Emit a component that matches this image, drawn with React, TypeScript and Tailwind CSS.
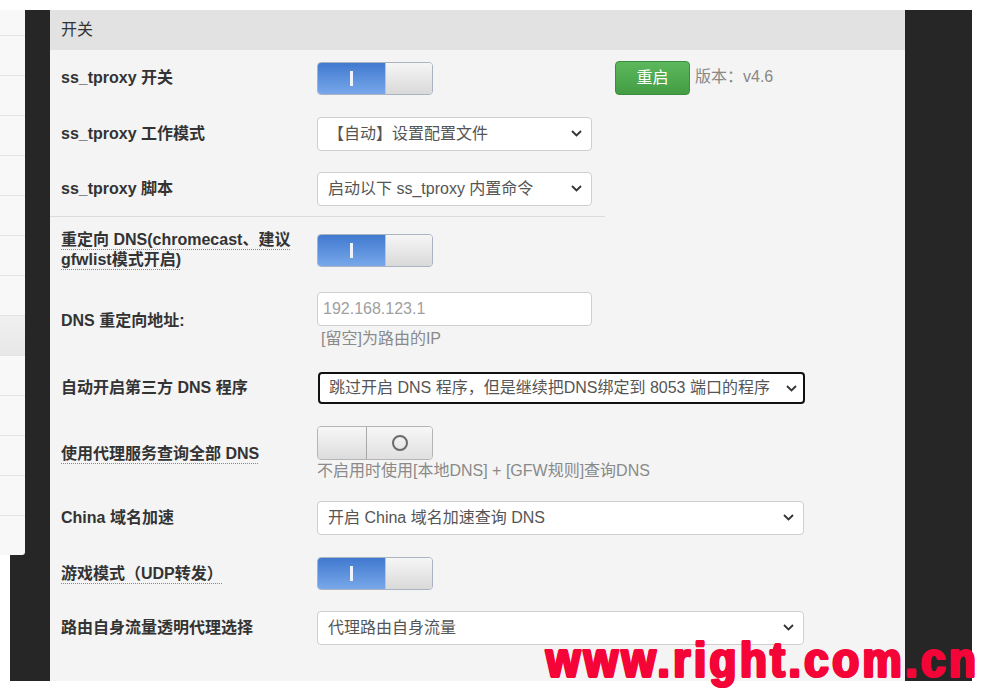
import type { ReactNode } from "react";

const FONT = { fontFamily: '"Liberation Sans", "Noto Sans CJK SC", sans-serif' };

function Toggle({ on }: { on: boolean }) {
  if (on) {
    return (
      <div className="flex h-[33px] w-[116px] overflow-hidden rounded-[4px] border border-[#a9b3c2]">
        <div className="flex w-[67px] items-center justify-center bg-gradient-to-b from-[#4179cf] to-[#78a8ea]">
          <span className="h-[15px] w-[3px] bg-[#eef4ff]" />
        </div>
        <div className="flex-1 border-l border-[#c4c4c4] bg-gradient-to-b from-[#f6f6f6] to-[#d9d9d9]" />
      </div>
    );
  }
  return (
    <div className="flex h-[34px] w-[116px] overflow-hidden rounded-[4px] border border-[#b5b5b5]">
      <div className="w-[49px] border-r border-[#a8a8a8] bg-gradient-to-b from-[#f7f7f7] to-[#dcdcdc]" />
      <div className="flex flex-1 items-center justify-center bg-gradient-to-b from-[#f7f7f7] to-[#e0e0e0]">
        <span className="h-[16px] w-[16px] rounded-full border-2 border-[#6a6a6a]" />
      </div>
    </div>
  );
}

function Chevron() {
  return (
    <svg width="11" height="7" viewBox="0 0 11 7" className="shrink-0">
      <path d="M1 1l4.5 4.5L10 1" fill="none" stroke="#333" strokeWidth="1.8" />
    </svg>
  );
}

function Select({ text, wide, focused }: { text: string; wide?: boolean; focused?: boolean }) {
  return (
    <div
      className={
        "flex items-center justify-between bg-white text-[16px] text-[#555] " +
        (wide ? "w-[487px] " : "w-[275px] ") +
        (focused
          ? "h-[32px] rounded-[4px] border-2 border-[#111] pl-[9px] pr-[6px]"
          : "h-[34px] rounded-[4px] border border-[#cfcfcf] pl-[10px] pr-[9px]")
      }
    >
      <span className="whitespace-nowrap">{text}</span>
      <Chevron />
    </div>
  );
}

function Row({ h, label, children }: { h: string; label: ReactNode; children: ReactNode }) {
  return (
    <div className={"flex items-center " + h}>
      <div className="w-[267px] pl-[11px] text-[16px] font-bold leading-[20px] text-[#333]">{label}</div>
      <div className="flex items-center">{children}</div>
    </div>
  );
}

function Dotted({ children }: { children: ReactNode }) {
  return (
    <span className="underline decoration-[#888] decoration-dotted decoration-1 underline-offset-[4px]">
      {children}
    </span>
  );
}

export default function App() {
  const cells = Array.from({ length: 13 });

  return (
    <div className="relative h-[691px] w-[983px] overflow-hidden bg-white" style={FONT}>
      <div className="pt-[10px] pl-[10px] pr-[11px]">
        <div className="flex h-[671px] bg-[#262626]">
          {/* left nav strip */}
          <div className="w-[40px]">
            <div className="-ml-[10px] h-[545px] w-[25px] rounded-br-[3px] bg-[#f8f8f8]">
              <div className="h-[25px]" />
              {cells.map((_, i) => (
                <div
                  key={i}
                  className={
                    "h-[40px] border-t border-[#e4e4e4] " +
                    (i === 7 ? "bg-gradient-to-b from-[#f0f0f0] to-[#e8e8e8]" : "")
                  }
                />
              ))}
            </div>
          </div>

          {/* main panel */}
          <div className="w-[855px] bg-[#f4f4f4]">
            <div className="flex h-[40px] items-center bg-[#e2e2e2] pl-[11px] text-[16px] text-[#333]">开关</div>

            <Row h="h-[56px]" label="ss_tproxy 开关">
              <Toggle on />
              <button className="ml-[182px] h-[34px] w-[75px] rounded-[4px] border border-[#3d8b3d] bg-gradient-to-b from-[#5cb85c] to-[#449d44] text-[16px] text-white">
                重启
              </button>
              <span className="ml-[5px] -mt-[2px] text-[16px] text-[#888]">版本：v4.6</span>
            </Row>

            <Row h="h-[55px]" label="ss_tproxy 工作模式">
              <Select text="【自动】设置配置文件" />
            </Row>

            <Row h="h-[55px]" label="ss_tproxy 脚本">
              <Select text="启动以下 ss_tproxy 内置命令" />
            </Row>
            <div className="h-px w-[555px] bg-[#dcdcdc]" />

            <Row
              h="h-[66px]"
              label={
                <Dotted>
                  重定向 DNS(chromecast、建议
                  <br />
                  gfwlist模式开启)
                </Dotted>
              }
            >
              <Toggle on />
            </Row>

            <Row h="h-[75px]" label="DNS 重定向地址:">
              <div className="flex flex-col">
                <div className="flex h-[34px] w-[275px] items-center rounded-[4px] border border-[#cfcfcf] bg-white pl-[5px] text-[16px] text-[#a0a0a0]">
                  192.168.123.1
                </div>
                <span className="mt-[3px] pl-[4px] text-[16px] leading-[20px] text-[#8a8a8a]">[留空]为路由的IP</span>
              </div>
            </Row>

            <Row h="h-[60px]" label="自动开启第三方 DNS 程序">
              <div className="ml-[1px]">
                <Select wide focused text="跳过开启 DNS 程序，但是继续把DNS绑定到 8053 端口的程序" />
              </div>
            </Row>

            <Row h="h-[71px]" label={<Dotted>使用代理服务查询全部 DNS</Dotted>}>
              <div className="flex flex-col">
                <Toggle on={false} />
                <span className="mt-[1px] text-[16px] leading-[20px] text-[#8a8a8a]">
                  不启用时使用[本地DNS] + [GFW规则]查询DNS
                </span>
              </div>
            </Row>

            <Row h="h-[57px]" label="China 域名加速">
              <Select wide text="开启 China 域名加速查询 DNS" />
            </Row>

            <Row h="h-[55px]" label={<Dotted>游戏模式（UDP转发）</Dotted>}>
              <Toggle on />
            </Row>

            <Row h="h-[53px]" label="路由自身流量透明代理选择">
              <Select wide text="代理路由自身流量" />
            </Row>
          </div>
        </div>
      </div>

      {/* watermark */}
      <div
        className="absolute left-[546px] top-[641px] origin-bottom scale-y-[1.12] whitespace-nowrap text-[44px] font-bold leading-none tracking-[3.5px] text-[#f50537]"
        style={{
          WebkitTextStroke: "2px #f50537",
          textShadow: "1.5px 0 0 #f50537, -1.5px 0 0 #f50537",
        }}
      >
        www.right.com.cn
      </div>
    </div>
  );
}
